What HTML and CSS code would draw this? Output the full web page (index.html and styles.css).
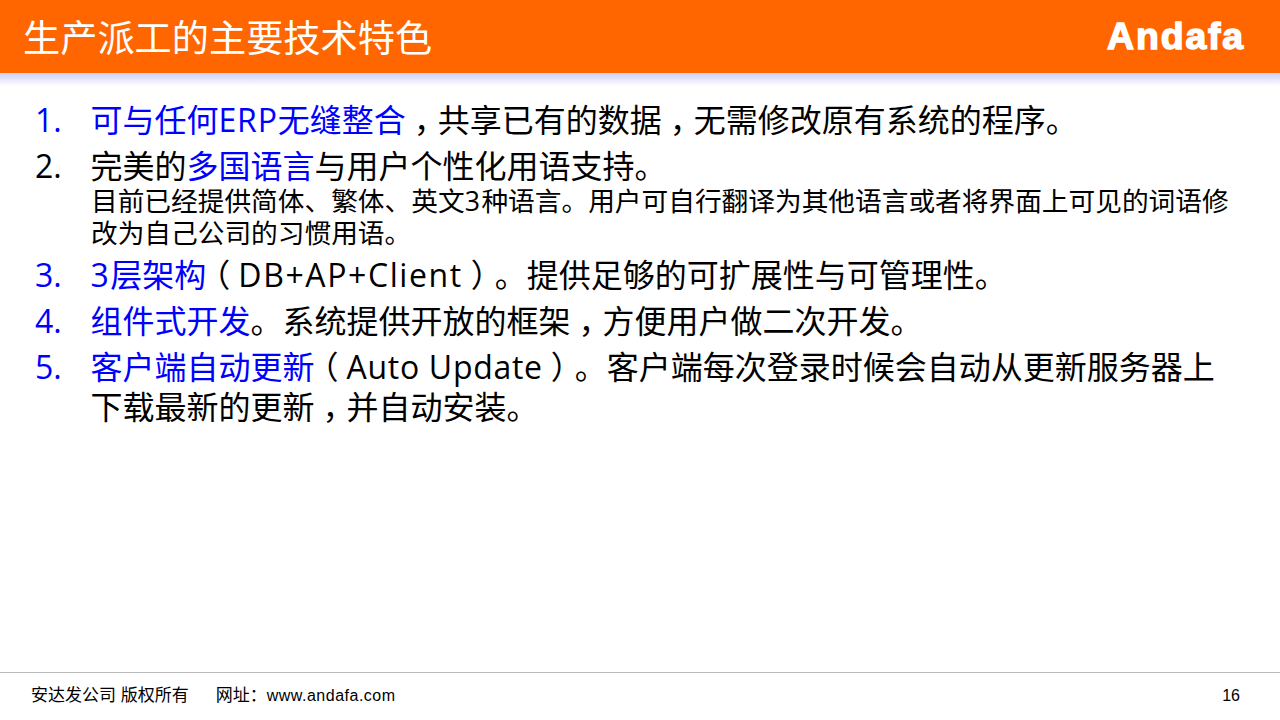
FILE: index.html
```html
<!DOCTYPE html>
<html lang="zh-CN">
<head>
<meta charset="utf-8">
<title>生产派工的主要技术特色</title>
<link rel="stylesheet" href="styles.css">
</head>
<body>
<div class="slide">
  <header class="banner">
    <h1 class="title">生产派工的主要技术特色</h1>
    <div class="logo">Andafa</div>
  </header>
  <div class="glow"></div>
  <main class="content">
    <ol class="list">
      <li class="item"><span class="num">1.</span><div class="body"><p class="line"><span class="hl">可与任何<span class="erp">ERP</span>无缝整合</span><span class="shift-r">，</span>共享已有的数据<span class="shift-r">，</span>无需修改原有系统的程序。</p></div></li>
      <li class="item"><span class="num num-black">2.</span><div class="body"><p class="line">完美的<span class="hl">多国语言</span>与用户个性化用语支持。</p><p class="sub">目前已经提供简体、繁体、英文<span class="digit">3</span>种语言。用户可自行翻译为其他语言或者将界面上可见的词语修改为自己公司的习惯用语。</p></div></li>
      <li class="item"><span class="num">3.</span><div class="body"><p class="line"><span class="hl"><span class="digit">3</span>层架构</span><span class="shift-l">（</span><span class="lat-wide">DB+AP+Client</span><span class="shift-r">）</span>。提供足够的可扩展性与可管理性。</p></div></li>
      <li class="item"><span class="num">4.</span><div class="body"><p class="line"><span class="hl">组件式开发</span>。系统提供开放的框架<span class="shift-r">，</span>方便用户做二次开发。</p></div></li>
      <li class="item"><span class="num">5.</span><div class="body"><p class="line"><span class="hl">客户端自动更新</span><span class="shift-l">（</span><span class="lat">Auto Update</span><span class="shift-r">）</span>。客户端每次登录时候会自动从更新服务器上下载最新的更新<span class="shift-r">，</span>并自动安装。</p></div></li>
    </ol>
  </main>
  <footer class="footer">
    <div class="foot-left"><span>安达发公司 版权所有</span><span>网址：<span class="foot-lat">www.andafa.com</span></span></div>
    <div class="page">16</div>
  </footer>
</div>
</body>
</html>
```
FILE: styles.css
```css
* { box-sizing: border-box; margin: 0; padding: 0; }
html, body { width: 1280px; height: 720px; overflow: hidden; background: #fff; }
.slide {
  width: 1280px; height: 720px; display: flex; flex-direction: column;
  font-family: "Open Sans", "Noto Sans CJK SC", sans-serif; color: #000;
  text-spacing-trim: space-all;
}
.banner {
  height: 73px; flex: none; background: #ff6600; display: flex;
  align-items: center; justify-content: space-between; padding: 0 35px 0 23px;
}
.title { font-size: 37.2px; font-weight: 400; color: #fff; font-family: "Noto Sans CJK SC", sans-serif; line-height: 73px; }
.logo { font-family: "Liberation Sans", sans-serif; font-weight: 700; font-size: 37.5px; color: #fff; letter-spacing: 1.8px; -webkit-text-stroke: 1.4px #fff; }
.glow { height: 13px; flex: none; background: linear-gradient(#cdd0fa, #e6e7fc 50%, #fff); }
.content { flex: 1; padding: 14px 50px 0 35px; }
.list { list-style: none; }
.item { display: flex; margin-bottom: 6px; }
.num { width: 55.5px; flex: none; font-size: 32px; line-height: 40px; color: #0000ff; }
.num-black { color: #000; }
.body { flex: 1; }
.line { font-size: 32px; line-height: 40px; }
.hl { color: #0000ff; }
.erp { letter-spacing: 0.8px; }
.digit { letter-spacing: 1.5px; }
.lat { letter-spacing: 0.7px; }
.lat-wide { letter-spacing: 1.6px; }
.shift-r { margin-left: 8px; margin-right: -8px; }
.shift-l { margin-left: -8px; margin-right: 8px; }
.sub { font-size: 26.7px; line-height: 32px; padding-left: 0.5px; margin-top: -1px; }
.footer {
  height: 48px; flex: none; border-top: 1px solid #bbb; display: flex;
  justify-content: space-between; padding: 12px 40px 0 31px;
  font-family: "Liberation Sans", "Noto Sans CJK SC", sans-serif; font-size: 17px; line-height: 22px;
}
.foot-left { display: flex; gap: 27px; }
.foot-lat { font-size: 16px; letter-spacing: 0.5px; }
.page { font-size: 16px; }
```
